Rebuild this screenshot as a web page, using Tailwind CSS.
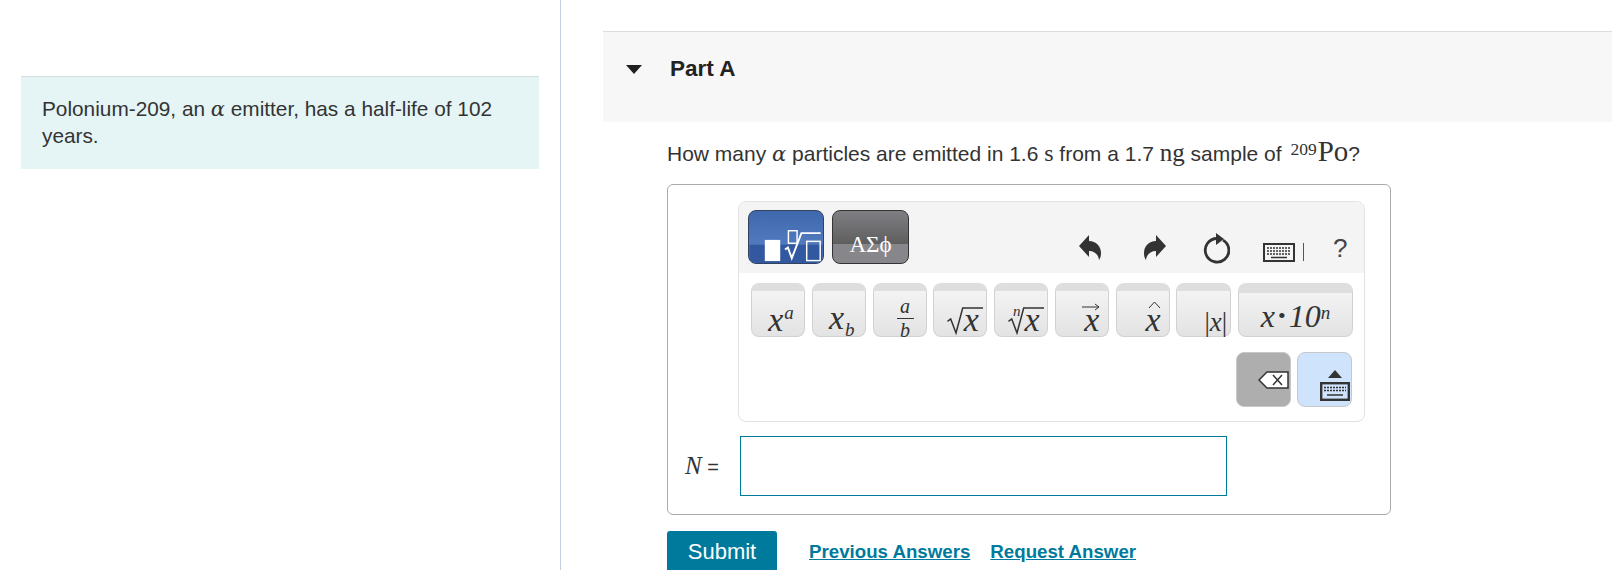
<!DOCTYPE html>
<html lang="en">
<head>
    <meta charset="UTF-8">
    <title>Part A</title>
    <script src="https://cdn.jsdelivr.net/npm/@tailwindcss/browser@4"></script>
</head>
<body class="bg-white">
    <div class="flex h-[570px] w-[1612px] overflow-hidden font-['Liberation_Sans',sans-serif] text-[21px] text-[#333]">

        <!-- Left column: problem intro -->
        <div class="w-[561px] shrink-0 border-r border-[#c3d0e0] pl-[21px] pr-[21px] pt-[76px]">
            <div class="h-[93px] border-t border-[#d5e0e0] bg-[#e5f5f6] pl-[21px] pr-[20px] pt-[18px] text-[20.800px] leading-[27px]">
                Polonium-209, an <span class="font-['DejaVu_Serif',serif] italic text-[21px] leading-none">α</span> emitter, has a half-life of 102 years.
            </div>
        </div>

        <!-- Right column -->
        <div class="flex-1 pl-[42px] pt-[31px]">
            <div class="flex h-[91px] border-t border-[#dcdcdc] bg-[#f7f7f7] pt-[25px]">
                <svg class="ml-[23px] mt-[8px] h-[9px] w-[16px]" viewBox="0 0 16 9"><path d="M0 0h16L8 9z" fill="#1f1f1f"/></svg>
                <div class="ml-[28px] text-[22.500px] font-bold leading-[24px] text-[#222]">Part A</div>
            </div>

            <div class="pl-[64px]">
                <div class="mt-[15px] h-[36px] whitespace-nowrap text-[21px] leading-[28px]">
                    How many <span class="font-['DejaVu_Serif',serif] italic text-[21px] leading-none">α</span> particles are emitted in 1.6 <span class="font-['Liberation_Serif',serif] text-[24px] leading-none">s</span> from a 1.7 <span class="font-['Liberation_Serif',serif] text-[25px] leading-none">ng</span> sample of <span class="relative -top-[6px] ml-[3px] font-['Liberation_Serif',serif] text-[17.500px] leading-none">209</span><span class="ml-[1px] font-['Liberation_Serif',serif] text-[29px] leading-none">Po</span>?
                </div>

                <!-- Answer box -->
                <div class="mt-[11px] h-[331px] w-[724px] rounded-md border border-[#aaa] pt-[16px]">
                    <div class="ml-[70px] h-[221px] w-[627px] rounded-lg border border-[#e2e2e2]">
                        <!-- Top toolbar -->
                        <div class="flex h-[71px] items-start rounded-t-lg bg-[#f4f4f4] pl-[9px] pt-[8px]">
                            <div class="h-[54px] w-[76px] overflow-hidden rounded-lg border border-[#33435f] bg-linear-to-b from-[#3f68ad] to-[#5a84c8]">
                                <svg class="h-full w-full" viewBox="0 0 76 54">
                                    <rect y="35" width="76" height="19" fill="#32599f"/>
                                    <rect x="16" y="30" width="16" height="22" fill="#fff"/>
                                    <path d="M37 40l3-2 4 11 10-26h20" fill="none" stroke="#fff" stroke-width="2"/>
                                    <rect x="40.500" y="20.500" width="9" height="13" fill="none" stroke="#fff" stroke-width="1.500"/>
                                    <rect x="59.500" y="31.500" width="14" height="20" fill="none" stroke="#fff" stroke-width="1.500"/>
                                </svg>
                            </div>
                            <div class="ml-[8px] flex h-[54px] w-[77px] items-end justify-center rounded-lg border border-[#333] bg-[linear-gradient(#7f7e83,#5e5e5e_64%,#87868b_64%)] pb-[5px] font-['Liberation_Serif',serif] text-[23px] leading-[26px] text-white">ΑΣϕ</div>

                            <svg class="ml-[170px] mt-[25px] h-[25px] w-[22px]" viewBox="0 0 22 25"><path d="M10 0v6c7 0 12 5 12 12 0 3-.6 5-2 7-.5-5-4-9-10-9v6L0 11z" fill="#333"/></svg>
                            <svg class="ml-[43px] mt-[25px] h-[25px] w-[22px]" viewBox="0 0 22 25"><path d="M12 0v6C5 6 0 11 0 18c0 3 .6 5 2 7 .5-5 4-9 10-9v6l10-11z" fill="#333"/></svg>
                            <svg class="ml-[37px] mt-[23px] h-[31px] w-[27px]" viewBox="0 0 27 31"><path d="M14 5.500a11.800 11.800 0 1 0 6 1.600" fill="none" stroke="#333" stroke-width="2.800"/><path d="M13 0l8 6-8 6z" fill="#333"/></svg>
                            <svg class="ml-[33px] mt-[33px] h-[19px] w-[32px]" viewBox="0 0 32 19">
                                <rect x="1" y="1" width="30" height="17" fill="none" stroke="#333" stroke-width="2"/>
                                <path d="M4 5h24M4 8h24M4 11h24" stroke="#333" stroke-width="1.500" stroke-dasharray="2 1"/>
                                <path d="M8 14.500h16" stroke="#333" stroke-width="1.500"/>
                            </svg>
                            <div class="ml-[8px] mt-[33px] h-[18px] w-px bg-[#555]"></div>
                            <div class="ml-[29px] mt-[23px] text-[26px] leading-[30px] text-[#444]">?</div>
                        </div>

                        <!-- Math keys, first row -->
                        <div class="mt-[10px] flex gap-[6.750px] pl-[12px] font-['Liberation_Serif',serif] italic text-[#333]">
                            <div class="flex h-[54px] w-[54px] shrink-0 items-end justify-center rounded-lg border border-t-[8px] border-[#d2d2d2] border-t-[#dedede] bg-linear-to-b from-[#f3f3f3] to-[#e3e3e3] pb-[1px] pl-[6px] text-[34px] leading-[30px]">x<span class="mb-[12px] ml-[1px] text-[19px] leading-[20px]">a</span></div>
                            <div class="flex h-[54px] w-[54px] shrink-0 items-end justify-center rounded-lg border border-t-[8px] border-[#d2d2d2] border-t-[#dedede] bg-linear-to-b from-[#f3f3f3] to-[#e3e3e3] pb-[3px] pl-[6px] text-[34px] leading-[30px]">x<span class="-mb-[7px] ml-[1px] text-[19px] leading-[20px]">b</span></div>
                            <div class="flex h-[54px] w-[54px] shrink-0 flex-col items-center justify-end rounded-lg border border-t-[8px] border-[#d2d2d2] border-t-[#dedede] bg-linear-to-b from-[#f3f3f3] to-[#e3e3e3] pl-[11px] text-[20px] leading-[19px]"><span>a</span><span class="my-[2px] h-px w-[17px] shrink-0 bg-[#333]"></span><span class="h-[15px]">b</span></div>
                            <div class="relative flex h-[54px] w-[54px] shrink-0 items-end justify-center rounded-lg border border-t-[8px] border-[#d2d2d2] border-t-[#dedede] bg-linear-to-b from-[#f3f3f3] to-[#e3e3e3] pb-[1px] pl-[22px] text-[34px] leading-[30px]"><svg class="absolute left-[13px] top-[16px] h-[28px] w-[38px]" viewBox="0 0 38 28"><path d="M.5 14.300L3.700 12 9 26 15.700 1H36" fill="none" stroke="#333" stroke-width="1.500"/></svg>x</div>
                            <div class="relative flex h-[54px] w-[54px] shrink-0 items-end justify-center rounded-lg border border-t-[8px] border-[#d2d2d2] border-t-[#dedede] bg-linear-to-b from-[#f3f3f3] to-[#e3e3e3] pb-[1px] pl-[22px] text-[34px] leading-[30px]"><span class="absolute left-[18px] top-[13px] text-[15px] leading-[15px]">n</span><svg class="absolute left-[13px] top-[16px] h-[28px] w-[38px]" viewBox="0 0 38 28"><path d="M.5 14.300L3.700 12 9 26 15.700 1H36" fill="none" stroke="#333" stroke-width="1.500"/></svg>x</div>
                            <div class="relative flex h-[54px] w-[54px] shrink-0 items-end justify-center rounded-lg border border-t-[8px] border-[#d2d2d2] border-t-[#dedede] bg-linear-to-b from-[#f3f3f3] to-[#e3e3e3] pb-[1px] pl-[20px] text-[34px] leading-[30px]"><svg class="absolute left-[26px] top-[12px] h-[8px] w-[18px]" viewBox="0 0 18 8"><path d="M0 4h17M13 1l4 3-4 3" fill="none" stroke="#333"/></svg>x</div>
                            <div class="relative flex h-[54px] w-[54px] shrink-0 items-end justify-center rounded-lg border border-t-[8px] border-[#d2d2d2] border-t-[#dedede] bg-linear-to-b from-[#f3f3f3] to-[#e3e3e3] pb-[1px] pl-[21px] text-[34px] leading-[30px]"><svg class="absolute left-[31px] top-[10px] h-[8px] w-[13px]" viewBox="0 0 13 8"><path d="M1 7l5.500-6L12 7" fill="none" stroke="#333"/></svg>x</div>
                            <div class="flex h-[54px] w-[55px] shrink-0 items-end justify-end rounded-lg border border-t-[8px] border-[#d2d2d2] border-t-[#dedede] bg-linear-to-b from-[#f3f3f3] to-[#e3e3e3] pb-[1px] pr-[3px] text-[27px] leading-[26px]"><span class="not-italic">|</span>x<span class="not-italic">|</span></div>
                            <div class="flex h-[54px] w-[115px] shrink-0 items-end justify-center rounded-lg border border-t-[10px] border-[#d2d2d2] border-t-[#dedede] bg-linear-to-b from-[#f3f3f3] to-[#e3e3e3] pb-[5px] text-[32px] leading-[30px]">x<span class="mx-[3px] not-italic text-[22px]">•</span>10<span class="mb-[8px] text-[19px] leading-[20px]">n</span></div>
                        </div>

                        <!-- Second row -->
                        <div class="mt-[15px] flex justify-end gap-[6px] pr-[12px]">
                            <div class="flex h-[55px] w-[55px] items-center justify-end rounded-lg border border-[#c8c8c8] bg-[#aeaeae] pr-[1px]">
                                <svg class="h-[18px] w-[31px]" viewBox="0 0 31 18"><path d="M1 9l8-8h21v16H9z" fill="#fff" stroke="#333" stroke-width="1.500"/><path d="M15 4l9 10M24 4l-9 10" stroke="#333" stroke-width="1.500"/></svg>
                            </div>
                            <div class="flex h-[55px] w-[55px] flex-col items-end rounded-lg border border-[#c8c8c8] bg-[#cfe3fd] pr-[1px] pt-[17px]">
                                <svg class="mr-[8px] h-[8px] w-[14px]" viewBox="0 0 14 8"><path d="M0 8h14L7 0z" fill="#333"/></svg>
                                <svg class="mt-[4px] h-[19px] w-[30px]" viewBox="0 0 30 19">
                                    <rect x="1.200" y="1.200" width="27.600" height="16.600" fill="none" stroke="#333" stroke-width="2.400"/>
                                    <path d="M4 5.500h22M4 8.500h22" stroke="#333" stroke-width="1.500" stroke-dasharray="2 1"/>
                                    <path d="M7 13h16" stroke="#333" stroke-width="1.500"/>
                                </svg>
                            </div>
                        </div>
                    </div>

                    <!-- Answer row -->
                    <div class="mt-[14px] flex items-center">
                        <div class="ml-[17px] w-[55px] whitespace-nowrap text-[20px]"><span class="font-['Liberation_Serif',serif] text-[25px] italic">N</span> =</div>
                        <input type="text" class="h-[60px] w-[487px] border border-[#007a9c] bg-white outline-none">
                    </div>
                </div>

                <!-- Actions -->
                <div class="mt-[16px] flex items-start">
                    <button class="h-[60px] w-[110px] rounded-t-[3px] bg-[#007a9c] pb-[19px] text-[22px] text-white">Submit</button>
                    <a href="#" class="ml-[32px] mt-[10px] text-[18.700px] font-bold leading-[22px] text-[#007a9c] underline">Previous Answers</a>
                    <a href="#" class="ml-[20px] mt-[10px] text-[18.700px] font-bold leading-[22px] text-[#007a9c] underline">Request Answer</a>
                </div>
            </div>
        </div>
    </div>
</body>
</html>
